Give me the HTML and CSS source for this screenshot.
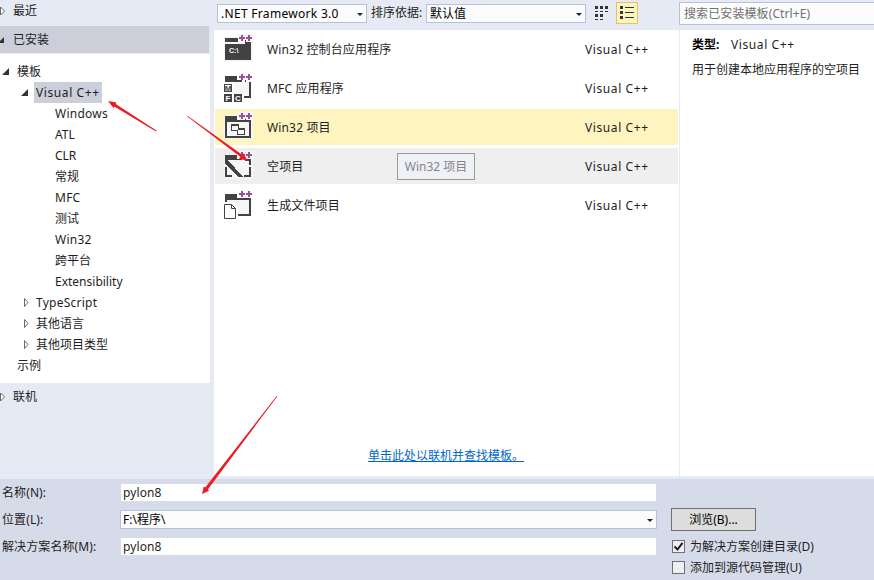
FILE: index.html
```html
<!DOCTYPE html>
<html lang="zh-CN">
<head>
    <meta charset="UTF-8">
    <title>新建项目</title>
    <link rel="stylesheet" href="styles.css">
</head>
<body>

<div class="dialog">
    <div class="main">
        <div class="sidebar">
            <div class="section recent"><svg class="arrow" width="6" height="10"><path d="M0.5 1L4.5 5L0.5 9Z"/></svg>最近</div>
            <div class="section installed"><svg class="arrow open" width="6" height="8"><path d="M4 1V7H-2Z"/></svg>已安装</div>
            <ul class="tree">
                <li><svg class="arrow open" width="8" height="8"><path d="M7 0V7H0Z"/></svg>模板</li>
                <li class="level1"><svg class="arrow open" width="8" height="8"><path d="M7 0V7H0Z"/></svg><span class="selected vc">Visual C++</span></li>
                <li class="level2 wide">Windows</li>
                <li class="level2">ATL</li>
                <li class="level2">CLR</li>
                <li class="level2">常规</li>
                <li class="level2 wide">MFC</li>
                <li class="level2">测试</li>
                <li class="level2 wide">Win32</li>
                <li class="level2">跨平台</li>
                <li class="level2">Extensibility</li>
                <li class="level1 wide"><svg class="arrow" width="8" height="9"><path d="M3.5 0.500L7 4.5L3.5 8.500Z"/></svg>TypeScript</li>
                <li class="level1"><svg class="arrow" width="8" height="9"><path d="M3.5 0.500L7 4.5L3.5 8.500Z"/></svg>其他语言</li>
                <li class="level1"><svg class="arrow" width="8" height="9"><path d="M3.5 0.500L7 4.5L3.5 8.500Z"/></svg>其他项目类型</li>
                <li class="leaf">示例</li>
            </ul>
            <div class="section online"><svg class="arrow" width="6" height="10"><path d="M0.5 1L4.5 5L0.5 9Z"/></svg>联机</div>
        </div>

        <div class="content">
            <div class="toolbar">
                <div class="combo framework"><span>.NET Framework 3.0</span><i class="caret"></i></div>
                <span class="sort-label">排序依据:</span>
                <div class="combo sort"><span>默认值</span><i class="caret"></i></div>
                <svg class="small-icons" width="14" height="14" shape-rendering="crispEdges">
                    <path d="M0 0h3v3h-3zM5 0h3v3h-3zM10 0h3v3h-3zM0 8h3v3h-3zM5 8h3v3h-3zM0 5h3v1h-3zM5 5h3v1h-3zM10 5h3v1h-3zM0 13h3v1h-3zM5 13h3v1h-3z"/>
                </svg>
                <div class="view-button">
                    <svg width="14" height="13" shape-rendering="crispEdges">
                        <path d="M0 0h3v3h-3zM0 5h3v3h-3zM0 10h3v3h-3zM5 1h9v1h-9zM5 6h9v1h-9zM5 11h9v1h-9z"/>
                    </svg>
                </div>
                <div class="search">搜索已安装模板(Ctrl+E)</div>
            </div>

            <div class="panes">
                <div class="templates">
                    <div class="template">
                        <svg class="icon" width="30" height="32" shape-rendering="crispEdges">
                            <path class="halo" d="M1 4h14v-3h15v28h-29z"/>
                            <path d="M2 5h13v4h-13zM2 11h26v16h-26zM22 9h6v2h-6zM22 7h1v2h-1z"/>
                            <path class="plus" d="M18 2h2v2h2v2h-2v2h-2v-2h-2v-2h2zM25 2h2v2h2v2h-2v2h-2v-2h-2v-2h2z"/>
                            <text x="6" y="20" class="console">C:\</text>
                        </svg>
                        <span class="name">Win32 控制台应用程序</span>
                        <span class="lang">Visual C++</span>
                    </div>
                    <div class="template">
                        <svg class="icon" width="30" height="32" shape-rendering="crispEdges">
                            <path class="halo" d="M11 10h15v13h-15z"/>
                            <path d="M2 4h12v6h-12zM14 8h5v2h-5zM22 8h1v2h-1zM26 10h2v16h-7v-2h5z"/>
                            <path class="plus" d="M18 2h2v2h2v2h-2v2h-2v-2h-2v-2h2zM25 2h2v2h2v2h-2v2h-2v-2h-2v-2h2z"/>
                            <path fill="#fff" d="M0 10h10v12h-10z"/>
                            <rect x="1.5" y="12.5" width="7" height="7" class="box"/>
                            <path d="M1 22h8v8h-8zM11 22h8v8h-8z"/>
                            <text x="5" y="19" class="letter dark">M</text>
                            <text x="5" y="29" class="letter">F</text>
                            <text x="15" y="29" class="letter">C</text>
                        </svg>
                        <span class="name">MFC 应用程序</span>
                        <span class="lang">Visual C++</span>
                    </div>
                    <div class="template hover">
                        <svg class="icon" width="30" height="32" shape-rendering="crispEdges">
                            <path class="halo" d="M1 4h14v-3h15v27h-29z"/>
                            <path d="M2 5h12v4h14v18h-26zM22 8h1v1h-1z"/>
                            <path class="halo" d="M4 11h22v14h-22z"/>
                            <path class="plus" d="M18 2h2v2h2v2h-2v2h-2v-2h-2v-2h2zM25 2h2v2h2v2h-2v2h-2v-2h-2v-2h2z"/>
                            <path d="M8 13h8v7h-8zM14 17h8v7h-8z"/>
                            <path class="halo" d="M9 15h6v4h-6zM15 19h6v4h-6z"/>
                        </svg>
                        <span class="name">Win32 项目</span>
                        <span class="lang">Visual C++</span>
                    </div>
                    <div class="template current">
                        <svg class="icon" width="30" height="32" shape-rendering="crispEdges">
                            <path class="halo" d="M1 4h14v-3h15v28h-29z"/>
                            <path d="M2 5h12v4h5v1h-17zM22 9h6v6h-2v-4h-4zM26 17h2v10h-7v-2h5zM2 17h2v8h5v2h-7z"/>
                            <path d="M2 10h3L20 27h-5L2 14z"/>
                            <path class="plus" d="M18 2h2v2h2v2h-2v2h-2v-2h-2v-2h2zM25 2h2v2h2v2h-2v2h-2v-2h-2v-2h2z"/>
                        </svg>
                        <span class="name">空项目</span>
                        <span class="lang">Visual C++</span>
                        <span class="tooltip">Win32 项目</span>
                    </div>
                    <div class="template">
                        <svg class="icon" width="30" height="32" shape-rendering="crispEdges">
                            <path d="M2 5h12v4h14v18h-14v-2h-12z"/>
                            <path class="halo" d="M4 11h22v14h-22z"/>
                            <path class="plus" d="M18 2h2v2h2v2h-2v2h-2v-2h-2v-2h2zM25 2h2v2h2v2h-2v2h-2v-2h-2v-2h2z"/>
                            <path fill="#fff" d="M0 13h10l5 5v13h-15z"/>
                            <path class="box" shape-rendering="auto" d="M1.5 15.5h7l4 4v10h-11zM8.500 15.500v4h4"/>
                        </svg>
                        <span class="name">生成文件项目</span>
                        <span class="lang">Visual C++</span>
                    </div>
                    <a class="online-link" href="#">单击此处以联机并查找模板。</a>
                </div>

                <div class="details">
                    <p><b>类型:</b><span class="vc">Visual C++</span></p>
                    <p>用于创建本地应用程序的空项目</p>
                </div>
            </div>
        </div>
    </div>

    <div class="footer">
        <div class="fields">
            <label>名称(N):</label>
            <div class="field">pylon8</div>
            <label>位置(L):</label>
            <div class="combo location"><span>F:\程序\</span><i class="caret"></i></div>
            <label>解决方案名称(M):</label>
            <div class="field">pylon8</div>
        </div>
        <div class="options">
            <div class="browse">浏览(B)...</div>
            <div class="check">
                <span class="checkbox"><svg width="11" height="11"><path d="M1.500 5.500L4.500 8.500L9.500 1.800"/></svg></span>为解决方案创建目录(D)
            </div>
            <div class="check"><span class="checkbox"></span>添加到源代码管理(U)</div>
        </div>
    </div>

    <svg class="marks" width="874" height="580">
        <path d="M108 101L116.500 102.500L115.700 104L156.500 130.600L156 131.400L114.300 106.500L113.500 108Z"/>
        <path d="M248 161L239 158.500L240.200 156.800L187 116.300L187.500 115.700L241.800 154.600L243 153Z"/>
        <path d="M202 494L203.800 486.500L205.200 487.600L276.800 395.700L277.400 396.200L207.800 489.600L209.200 490.700Z"/>
    </svg>
</div>

</body>
</html>
```
FILE: styles.css
```css
body {
    margin: 0;
    font-family: "Noto Sans", "Noto Sans CJK SC", sans-serif;
    font-size: 12px;
    line-height: 18px;
    color: #1e1e1e;
    overflow: hidden;
}

.dialog {
    position: relative;
    width: 874px;
    height: 580px;
    background-color: #e6eaf5;
    white-space: nowrap;
}

.main {
    display: flex;
    height: 479px;
}

.sidebar {
    width: 210px;
    margin-right: 4px;
}

.section {
    display: flex;
    align-items: center;
    box-sizing: border-box;
    height: 27px;
}

.section .arrow {
    margin-right: 7px;
}

.recent {
    height: 26px;
    padding-bottom: 5px;
}

.installed {
    width: 209px;
    background-color: #ccceda;
    margin-bottom: 1px;
}

.arrow {
    flex: none;
    fill: #fff;
    stroke: #6a6a6a;
}

.arrow.open {
    fill: #333;
    stroke: none;
}

.tree {
    list-style: none;
    margin: 0;
    padding: 7px 0 0 2px;
    height: 329px;
    box-sizing: border-box;
    background-color: #fff;
}

.tree li {
    display: flex;
    align-items: center;
    height: 21px;
}

.tree .arrow {
    margin-right: 7px;
}

.tree .level1 {
    padding-left: 19px;
}

.tree .level2 {
    padding-left: 53px;
}

.tree .leaf {
    padding-left: 15px;
}

.selected {
    background-color: #ccceda;
    line-height: 21px;
    margin-left: -2px;
    padding: 0 2px;
}

.wide {
    letter-spacing: 0.25px;
}

.vc,
.lang {
    letter-spacing: 0.6px;
}

.content {
    flex: 1;
}

.toolbar {
    display: flex;
    height: 30px;
    box-sizing: border-box;
    padding: 2px 0 0 3px;
}

.combo {
    display: flex;
    align-items: center;
    justify-content: space-between;
    box-sizing: border-box;
    height: 19px;
    border: 1px solid #b8c0da;
    background-color: #fcfcfc;
    color: #000;
    padding: 0 3px;
}

.toolbar .combo {
    margin-top: 2px;
}

.caret {
    border: 3px solid transparent;
    border-top-color: #1b293e;
    border-bottom: 0;
    margin-top: 1px;
}

.framework {
    width: 150px;
    letter-spacing: 0.3px;
}

.sort-label {
    width: 55px;
    padding-left: 4px;
    margin-top: 2px;
}

.sort {
    width: 160px;
}

.small-icons {
    margin: 4px 7px 0 10px;
    fill: #333;
}

.sort + .small-icons {
    margin-left: 9px;
}

.view-button {
    box-sizing: border-box;
    width: 22px;
    height: 22px;
    padding: 3px;
    border: 1px solid #e5c365;
    background-color: #fdf4bf;
    fill: #333;
}

.view-button svg {
    display: block;
}

.search {
    flex: 1;
    box-sizing: border-box;
    height: 23px;
    margin-left: 41px;
    padding-left: 4px;
    border: 1px solid #b8c0da;
    border-right: 0;
    background-color: #fcfcfc;
    color: #717171;
    line-height: 21px;
    letter-spacing: 0.1px;
}

.panes {
    display: flex;
    height: 446px;
    background-color: #fff;
}

.templates {
    display: flex;
    flex-direction: column;
    gap: 3px;
    width: 463px;
    padding: 1px 1px 0;
    border-right: 1px solid #e6eaf5;
}

.template {
    position: relative;
    display: flex;
    align-items: center;
    height: 36px;
    flex: none;
}

.hover {
    background-color: #fdf4bf;
}

.current {
    background-color: #efefef;
}

.icon {
    margin: 0 14px 0 8px;
    fill: #424242;
}

.icon .halo {
    fill: #f6f6f6;
}

.icon .plus {
    fill: #9b4f96;
}

.icon .box {
    fill: #fff;
    stroke: #424242;
}

.console {
    font: bold 7px "Liberation Sans", sans-serif;
    fill: #fff;
}

.letter {
    font: bold 8px "Liberation Sans", sans-serif;
    fill: #fff;
    text-anchor: middle;
}

.letter.dark {
    fill: #424242;
}

.name {
    width: 318px;
    letter-spacing: 0.15px;
}

.name,
.lang {
    padding-top: 2px;
}

.tooltip {
    position: absolute;
    left: 182px;
    top: 5px;
    width: 76px;
    height: 25px;
    border: 1px solid #999;
    background-color: #f0f1f7;
    color: #858585;
    line-height: 25px;
    text-align: center;
}

.online-link {
    align-self: flex-start;
    margin: auto 0 11px 153px;
    color: #0066cc;
}

.details {
    padding: 6px 0 0 12px;
}

.details p {
    margin: 0 0 7px;
}

.details b {
    display: inline-block;
    width: 39px;
    color: #000;
}

.footer {
    display: flex;
    height: 101px;
    background-color: #d6dbe9;
}

.fields {
    display: grid;
    grid-template-columns: 118px 537px;
    grid-auto-rows: 19px;
    row-gap: 8px;
    padding: 4px 0 0 2px;
}

.fields label {
    padding-top: 1px;
    letter-spacing: 0.1px;
}

.field {
    height: 17px;
    margin: 1px 1px 0;
    padding-left: 2px;
    background-color: #fff;
    line-height: 17px;
    letter-spacing: 0.1px;
}

.location {
    padding-left: 2px;
}

.options {
    padding: 29px 0 0 14px;
}

.browse {
    box-sizing: border-box;
    width: 85px;
    height: 23px;
    margin-bottom: 5px;
    border: 1px solid #707070;
    background-color: #ddd;
    color: #000;
    line-height: 21px;
    text-align: center;
}

.check {
    display: flex;
    align-items: center;
    height: 21px;
    padding-left: 1px;
}

.checkbox {
    width: 11px;
    height: 11px;
    margin-right: 5px;
    border: 1px solid #707070;
    background-color: #efeff2;
}

.checkbox svg {
    display: block;
    fill: none;
    stroke: #1e1e1e;
    stroke-width: 2;
}

/* red pointers over the dialog */
.marks {
    position: absolute;
    left: 0;
    top: 0;
    fill: #ed1c24;
    pointer-events: none;
}
```
